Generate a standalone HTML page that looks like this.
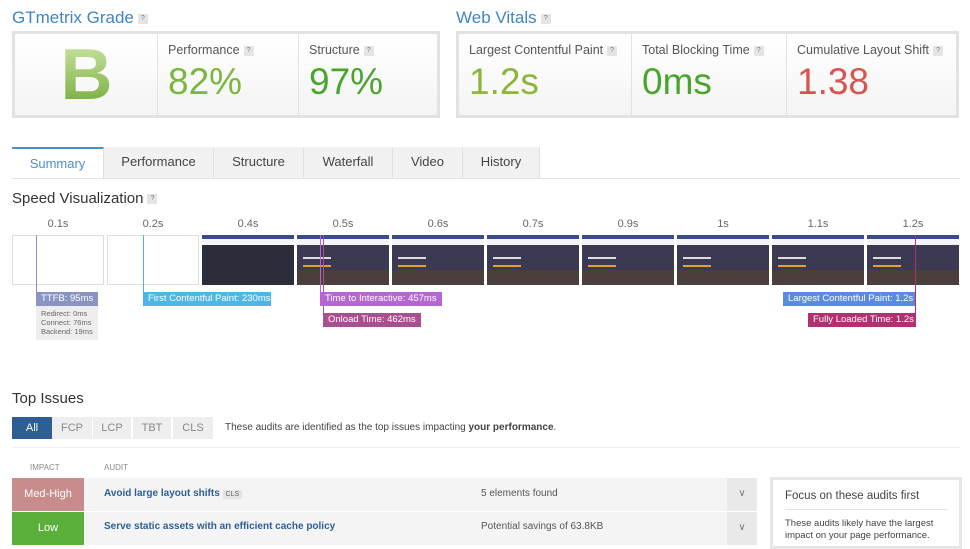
<!DOCTYPE html>
<html><head><meta charset="utf-8"><style>
*{margin:0;padding:0;box-sizing:border-box}
body{width:970px;height:546px;background:#fff;font-family:"Liberation Sans",sans-serif;position:relative;overflow:hidden;color:#333}
.a{position:absolute}
.h{color:#3d86c2;font-size:17px}
.q{display:inline-block;width:10px;height:10px;background:#e4e4e4;color:#777;font-size:7px;line-height:10px;text-align:center;vertical-align:middle;margin-left:4px}
.box{border:3px solid #e2e2e2;background:linear-gradient(#fff,#f4f4f4)}
.cell{position:absolute;top:0;bottom:0;border-left:1px solid #e2e2e2}
.lab{position:absolute;left:10px;top:9px;font-size:12.5px;color:#555;white-space:nowrap}
.big{position:absolute;left:10px;top:27px;font-size:37px;white-space:nowrap}
.tab{position:absolute;top:147px;height:31px;background:#f1f1f1;border-right:1px solid #e0e0e0;font-size:13px;color:#444;text-align:center;line-height:29px}
.t{position:absolute;top:218px;font-size:11px;color:#666;width:92px;text-align:center}
.f{position:absolute;top:235px;width:92px;height:50px;border:1px solid #ddd;background:#fff}
.d{background:linear-gradient(#3a4a8a 0 4px,#f5f5f5 4px 10px,#2b2e3a 10px)}
.s{background:linear-gradient(#3a4a8a 0 4px,#f5f5f5 4px 10px,#3b3a52 10px 35px,#4a3f3c 35px)}
.s::after{content:"";position:absolute;left:6px;top:22px;width:28px;height:2px;background:#ddd;box-shadow:0 8px 0 -0px #e8a020}
.v{position:absolute;width:1px}
.m{position:absolute;height:14px;font-size:9.5px;color:#fff;line-height:14px;padding-left:5px;white-space:nowrap;overflow:hidden}
.fb{position:absolute;top:417px;height:22px;background:#eee;color:#888;font-size:11px;text-align:center;line-height:22px}
</style></head><body>
<div class="a h" style="left:12px;top:8px">GTmetrix Grade<span class="q">?</span></div>
<div class="a h" style="left:456px;top:8px">Web Vitals<span class="q">?</span></div>
<div class="a box" style="left:12px;top:31px;width:428px;height:87px">
 <div class="a" style="left:0;top:0;width:143px;height:81px;text-align:center;font-size:72px;font-weight:bold;line-height:82px;color:#8cc04a;background:linear-gradient(#d6eab0,#6aa62e);-webkit-background-clip:text;background-clip:text;-webkit-text-fill-color:transparent">B</div>
 <div class="cell" style="left:142px;width:141px"><div class="lab">Performance<span class="q">?</span></div><div class="big" style="color:#78b83c">82%</div></div>
 <div class="cell" style="left:283px;width:142px"><div class="lab">Structure<span class="q">?</span></div><div class="big" style="color:#4aa52e">97%</div></div>
</div>
<div class="a box" style="left:456px;top:31px;width:503px;height:87px">
 <div class="cell" style="left:0;width:172px;border:none"><div class="lab">Largest Contentful Paint<span class="q">?</span></div><div class="big" style="color:#8db53a">1.2s</div></div>
 <div class="cell" style="left:172px;width:155px"><div class="lab">Total Blocking Time<span class="q">?</span></div><div class="big" style="color:#4aa52e">0ms</div></div>
 <div class="cell" style="left:327px;width:170px"><div class="lab">Cumulative Layout Shift<span class="q">?</span></div><div class="big" style="color:#d9534f">1.38</div></div>
</div>
<div class="a" style="left:12px;top:178px;width:948px;height:1px;background:#e2e2e2"></div>
<div class="tab" style="left:12px;width:92px;background:#fff;border-top:2px solid #4a90c8;color:#4a90c8">Summary</div>
<div class="tab" style="left:104px;width:110px">Performance</div>
<div class="tab" style="left:214px;width:90px">Structure</div>
<div class="tab" style="left:304px;width:89px">Waterfall</div>
<div class="tab" style="left:393px;width:70px">Video</div>
<div class="tab" style="left:463px;width:77px">History</div>
<div class="a" style="left:12px;top:190px;font-size:15px;color:#333">Speed Visualization<span class="q">?</span></div>
<div class="t" style="left:12px">0.1s</div><div class="t" style="left:107px">0.2s</div><div class="t" style="left:202px">0.4s</div><div class="t" style="left:297px">0.5s</div><div class="t" style="left:392px">0.6s</div><div class="t" style="left:487px">0.7s</div><div class="t" style="left:582px">0.9s</div><div class="t" style="left:677px">1s</div><div class="t" style="left:772px">1.1s</div><div class="t" style="left:867px">1.2s</div>
<div class="f" style="left:12px"></div><div class="f" style="left:107px"></div>
<div class="f d" style="left:202px;border:none"></div>
<div class="f s" style="left:297px;border:none"></div><div class="f s" style="left:392px;border:none"></div><div class="f s" style="left:487px;border:none"></div><div class="f s" style="left:582px;border:none"></div><div class="f s" style="left:677px;border:none"></div><div class="f s" style="left:772px;border:none"></div><div class="f s" style="left:867px;border:none"></div>
<div class="v" style="left:36px;top:235px;height:57px;background:#8a94c2"></div>
<div class="m" style="left:36px;top:292px;width:62px;background:#8a94c2">TTFB: 95ms</div>
<div class="a" style="left:36px;top:306px;width:62px;height:34px;background:#eee;font-size:7.5px;color:#666;padding:3px 5px;line-height:9px">Redirect: 0ms<br>Connect: 76ms<br>Backend: 19ms</div>
<div class="v" style="left:143px;top:235px;height:57px;background:#4db6e6"></div>
<div class="m" style="left:143px;top:292px;width:128px;background:#4db6e6">First Contentful Paint: 230ms</div>
<div class="v" style="left:320px;top:235px;height:57px;background:#b467d0"></div>
<div class="v" style="left:323px;top:235px;height:78px;background:#a94f8f"></div>
<div class="m" style="left:320px;top:292px;width:122px;background:#b467d0">Time to Interactive: 457ms</div>
<div class="m" style="left:323px;top:313px;width:98px;background:#a94f8f">Onload Time: 462ms</div>
<div class="v" style="left:915px;top:235px;height:92px;background:#b03070"></div>
<div class="m" style="left:783px;top:292px;width:132px;background:#5b8be0">Largest Contentful Paint: 1.2s</div>
<div class="m" style="left:808px;top:313px;width:107px;background:#b03070">Fully Loaded Time: 1.2s</div>
<div class="a" style="left:12px;top:390px;font-size:15px;color:#333">Top Issues</div>
<div class="fb" style="left:12px;width:40px;background:#2d5e94;color:#fff">All</div>
<div class="fb" style="left:52px;width:40px">FCP</div><div class="fb" style="left:93px;width:38px">LCP</div><div class="fb" style="left:133px;width:38px">TBT</div><div class="fb" style="left:173px;width:40px">CLS</div>
<div class="a" style="left:225px;top:422px;font-size:10px;color:#444">These audits are identified as the top issues impacting <b>your performance</b>.</div>
<div class="a" style="left:12px;top:447px;width:948px;height:1px;background:#f0f0f0"></div>
<div class="a" style="left:30px;top:463px;font-size:8px;color:#888">IMPACT</div>
<div class="a" style="left:104px;top:463px;font-size:8px;color:#888">AUDIT</div>
<div class="a" style="left:12px;top:478px;width:745px;height:33px;background:#f4f4f4"></div>
<div class="a" style="left:12px;top:512px;width:745px;height:33px;background:#f4f4f4"></div>
<div class="a" style="left:12px;top:478px;width:72px;height:33px;background:#c98c8c;color:#fff;font-size:11px;text-align:center;line-height:33px">Med-High</div>
<div class="a" style="left:12px;top:512px;width:72px;height:33px;background:#5ab03a;color:#fff;font-size:11px;text-align:center;line-height:33px">Low</div>
<div class="a" style="left:104px;top:488px;font-size:10px;color:#2d5e94;font-weight:bold">Avoid large layout shifts <span style="background:#e4e4e4;color:#666;font-size:7px;font-weight:normal;padding:1px 3px">CLS</span></div>
<div class="a" style="left:104px;top:521px;font-size:10px;color:#2d5e94;font-weight:bold">Serve static assets with an efficient cache policy</div>
<div class="a" style="left:481px;top:488px;font-size:10px;color:#555">5 elements found</div>
<div class="a" style="left:481px;top:521px;font-size:10px;color:#555">Potential savings of 63.8KB</div>
<div class="a" style="left:727px;top:478px;width:30px;height:33px;background:#e9e9e9;color:#777;text-align:center;line-height:31px;font-size:10px">&#8744;</div>
<div class="a" style="left:727px;top:512px;width:30px;height:33px;background:#e9e9e9;color:#777;text-align:center;line-height:31px;font-size:10px">&#8744;</div>
<div class="a" style="left:770px;top:477px;width:192px;height:72px;border:3px solid #e6e6e6;background:#fff;padding:10px 12px">
 <div style="font-size:11.5px;color:#444;padding-bottom:7px;border-bottom:1px solid #e2e2e2">Focus on these audits first</div>
 <div style="font-size:9.5px;color:#444;margin-top:8px;line-height:12px">These audits likely have the largest impact on your page performance.</div>
</div>
</body></html>
